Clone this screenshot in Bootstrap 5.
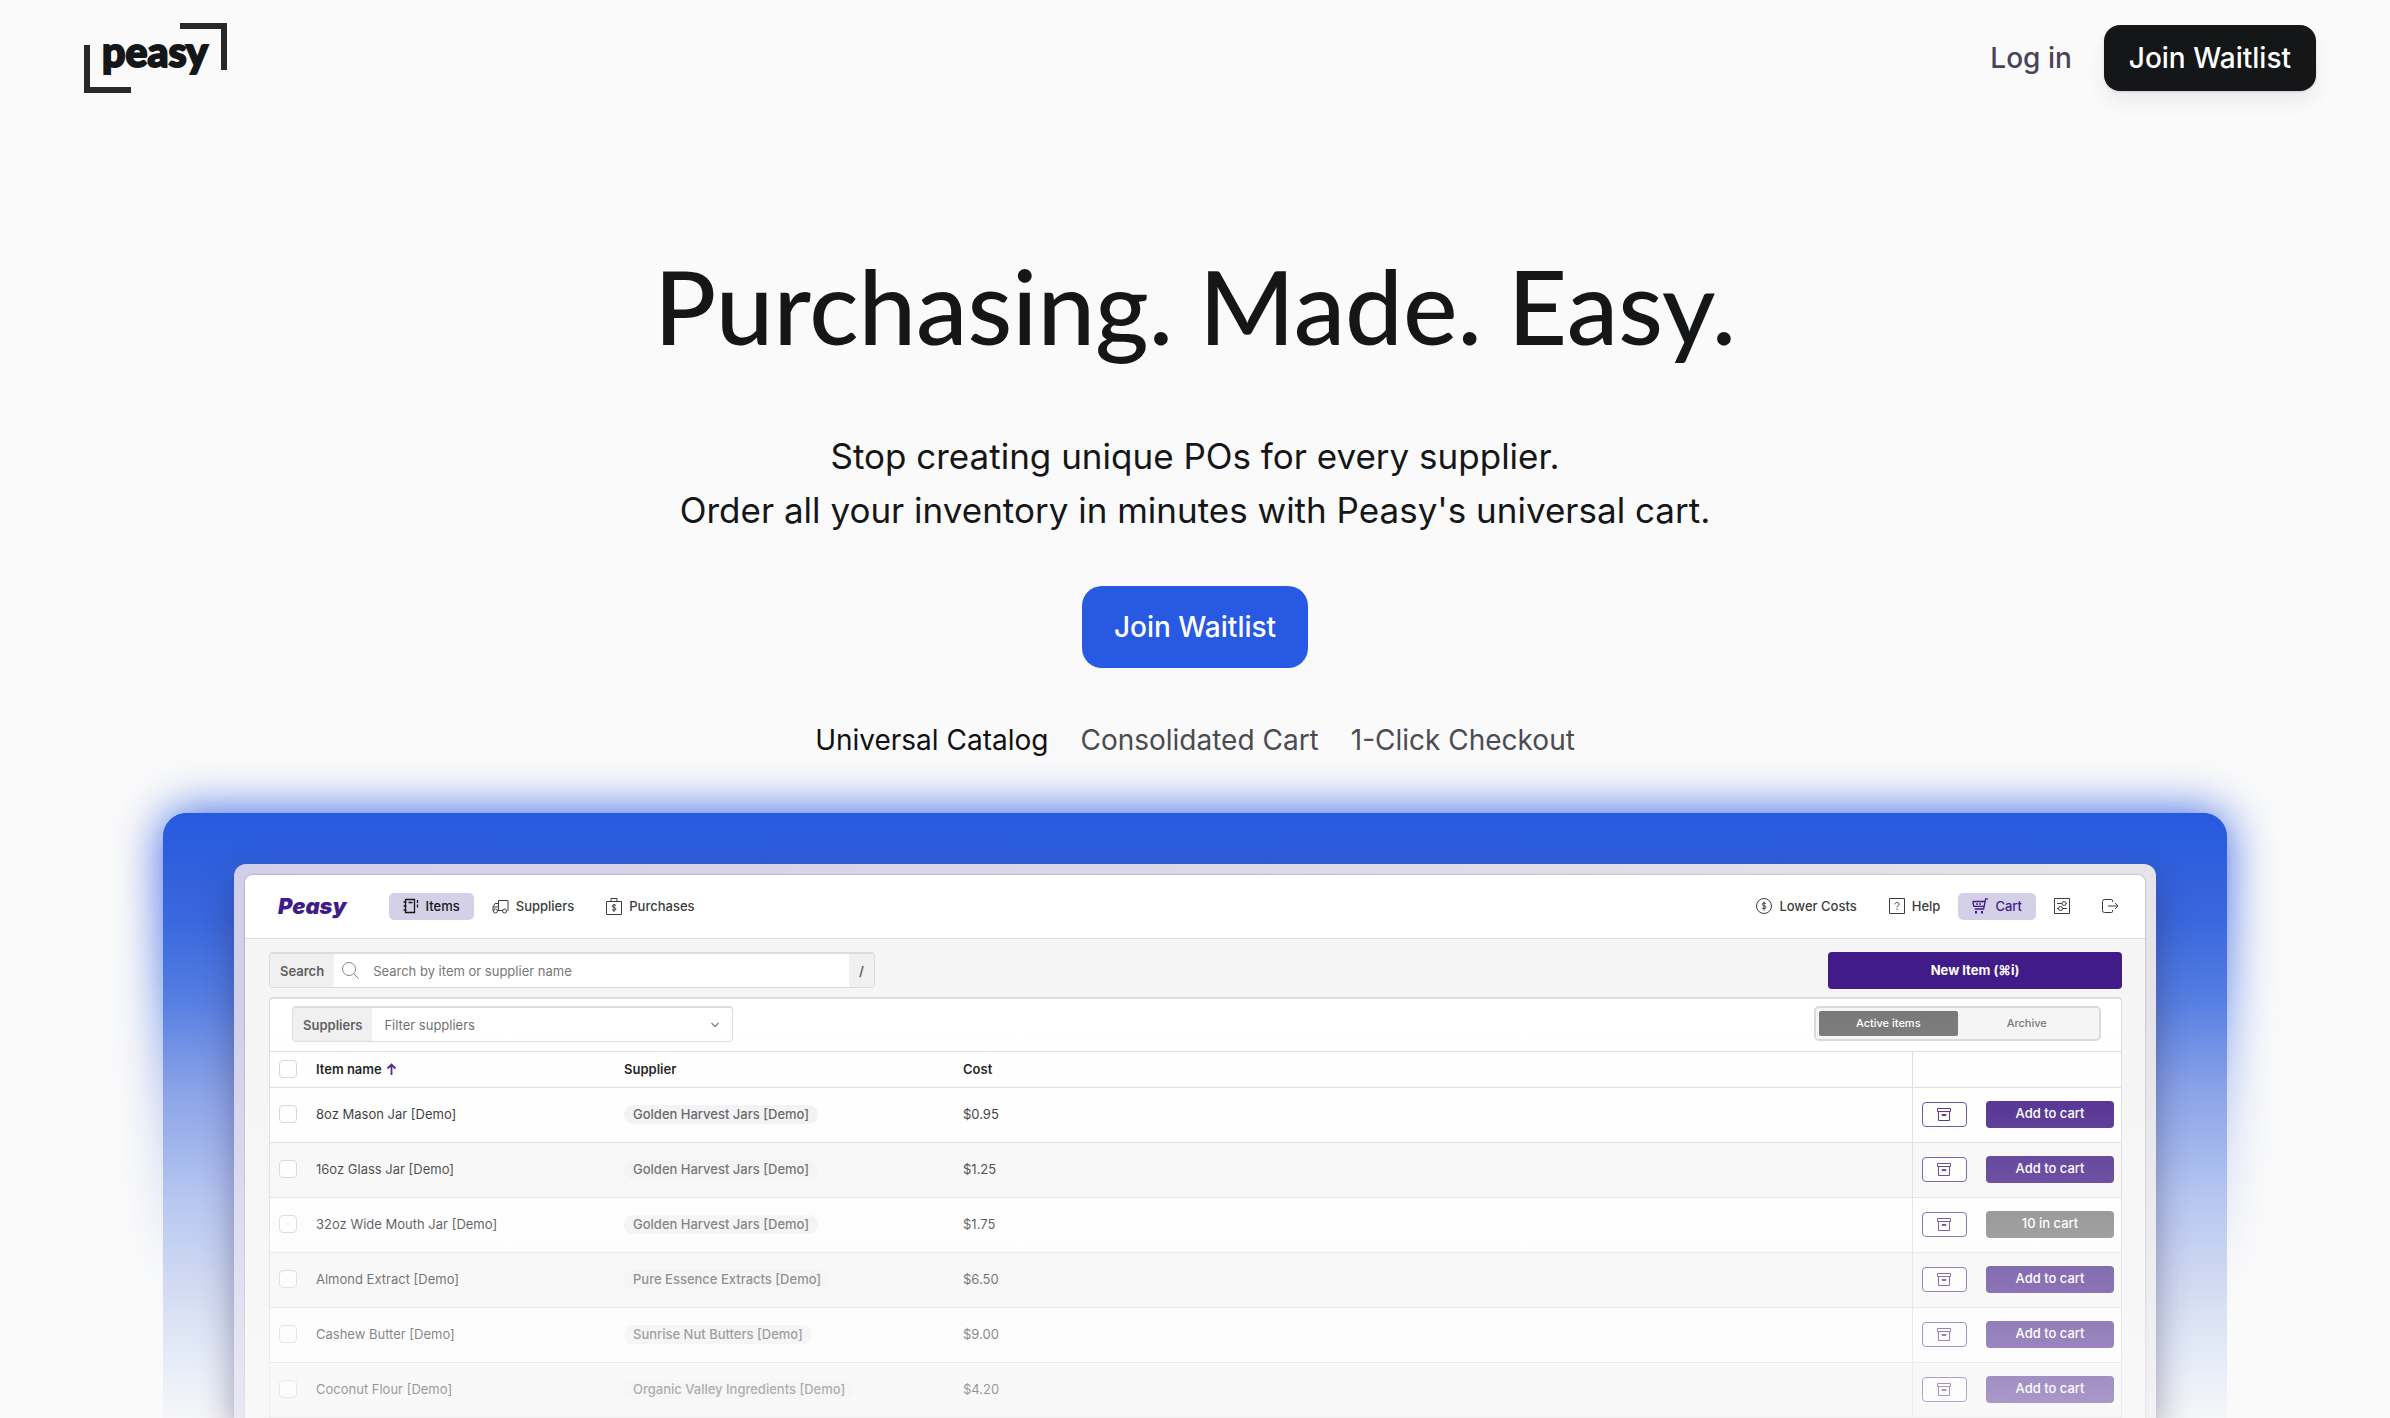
<!DOCTYPE html>
<html lang="en">
<head>
<meta charset="utf-8">
<meta name="viewport" content="width=device-width, initial-scale=1">
<title>Peasy</title>
<link href="https://cdn.jsdelivr.net/npm/bootstrap@5.3.0/dist/css/bootstrap.min.css" rel="stylesheet">
<style>
:root{--ink:#151618;--blue:#2759e2;--plum:#411b87;--line:#dcdcdc}
body{background:#fafafa;color:var(--ink);font-family:Inter,"Liberation Sans",sans-serif;overflow-x:hidden}
.site-header{padding:25px 74px 25px 84px}
.site-logo{display:block;margin:-8px 0}
.site-logo text{font-family:Lato,sans-serif;font-weight:900;font-size:41px;fill:var(--ink);stroke:var(--ink);stroke-width:2}
.site-link{font-size:28px;font-weight:500;line-height:42px;text-decoration:none;color:#4a4458}
.site-btn{font-size:28px;font-weight:500;line-height:42px;border:0;color:#fff}
.site-btn:hover{color:#fff;background:#333}
.btn-ink{background:var(--ink);padding:12px 25px;border-radius:16px;box-shadow:0 12px 20px rgba(0,0,0,.06),0 1px 2px rgba(40,20,60,.15)}
.btn-hero{background:var(--blue);padding:20px 32px;border-radius:20px}
.hero-title{font-family:Lato,"Open Sans",sans-serif;font-weight:500;font-size:103px;line-height:122px;margin:0 0 63px}
.hero-copy{font-size:35px;line-height:54px;margin:0 0 49px}
.hero{padding-top:128px}
.feature-tabs{gap:32px;margin:51px 0 52px}
.feature-tabs .nav-link{font-size:28px;line-height:42px;font-weight:400;color:#4b4b50;padding:0}
.feature-tabs .nav-link.active{color:#101012}

.stage{position:relative;isolation:isolate;max-width:2064px;padding:51px 71px 0;border-radius:24px 24px 0 0;
  background:linear-gradient(#2759e2 0%,#2f5fdc 8%,#3a68de 18%,#567fe2 31%,#8ba3e8 46%,#b7c7f1 64%,#d5ddf2 80%,#e8eef8 92%,#f5f6f9 100%)}
.stage::before{content:"";position:absolute;inset:0;z-index:-2;border-radius:24px;filter:blur(24px);
  background:linear-gradient(#2759e2,rgba(39,89,226,.8) 25%,rgba(39,89,226,.3) 50%,rgba(39,89,226,0) 78%)}
.stage::after{content:"";position:absolute;inset:0;z-index:-1;border-radius:24px 24px 0 0;background:inherit}
.frame{position:relative;padding:11px 11px 0;border-radius:12px 12px 0 0;background:linear-gradient(90deg,#d2cfea,#dcd8e8 50%,#e6e4e8);box-shadow:0 16px 34px rgba(40,30,80,.42)}
.fade-out{position:absolute;inset:0;pointer-events:none;background:linear-gradient(rgba(250,250,250,0) 27%,rgba(250,250,250,.58) 100%)}
.app{background:#f5f5f5;border-radius:8px 8px 0 0;box-shadow:0 0 2px rgba(60,50,90,.5);font-size:13px;line-height:20px}
.app svg{fill:none;stroke:currentColor;stroke-width:1;flex:none;display:block}
.app-nav{background:#fff;border-bottom:1px solid var(--line);border-radius:8px 8px 0 0;padding:17px 12px 18px 33px;height:64px}
.app-brand{font-size:22px;font-weight:900;font-style:italic;line-height:27px;color:var(--plum);text-decoration:none;margin-right:42px}
.app-link{display:flex;align-items:center;gap:7px;height:27px;padding:0 14px;border-radius:5px;font-weight:500;color:#3d3d40;text-decoration:none}
.app-link.on{background:#d4d0e8;color:#151618}
.app-link.cart{background:#d4d0e8;color:var(--plum)}
.app-menu,.app-tools{gap:4px}
.app-body{padding:13px 23px 0 24px}
.field{border:1px solid var(--line);border-radius:4px;background:#fff;overflow:hidden;height:36px;display:flex;align-items:stretch}
.field-tag{background:#f0f0f0;color:#5f5f5f;font-weight:600;display:flex;align-items:center;padding:0 10px}
.field-icon{display:flex;align-items:center;padding:0 12px 0 8px}
.field input,.field select{border:0;outline:0;background:#fff;font-size:13px;color:#6f6f6f;min-width:0;flex:1}
.field select{appearance:none;padding:0 12px}
.field input::placeholder{color:#777;opacity:1}
.search-box{width:606px;border-top-width:2px}
.filter-box{width:441px;border-top-width:2px}
.btn-new{width:294px;height:37px;background:var(--plum);color:#fff;border:0;border-radius:4px;font-size:13px;font-weight:700;padding:0}
.panel-box{margin-top:8px;background:#fff;border:1px solid var(--line);border-top-width:2px;border-bottom:0;border-radius:4px 4px 0 0}
.filter-row{padding:7px 20px 9px 22px;border-bottom:1px solid var(--line)}
.segment{width:287px;height:35px;border:2px solid #dadada;border-radius:5px;background:#f5f5f5;padding:3px}
.segment .btn{flex:1;padding:0;border:0;border-radius:2px;font-size:11px;line-height:25px;font-weight:500;color:#777}
.segment .btn-check:checked+.btn{background:#797979;color:#fff}
.items{--bs-table-bg:transparent;table-layout:fixed;margin:0;font-size:13px;color:#1c1c1f}
.items th,.items td{height:55px;padding:0 0 1px;vertical-align:middle;border-bottom:1px solid var(--line);background:none;box-shadow:none;color:inherit}
.items thead th{height:35px;font-weight:600;color:#111}
.items tbody tr:nth-child(even){background:#f7f7f7}
.items .c-tick{width:46px;padding-left:9px}
.items .c-name{width:308px}
.items .c-supp{width:339px}
.items .c-act{width:209px;border-left:1px solid var(--line);padding:0 7px 1px 9px}
.items .form-check-input{display:block;width:18px;height:18px;margin:0;border:1px solid #d2d2d2;border-radius:4px;background-color:#fff}
.supplier{display:inline-block;padding:0 9px;border-radius:9px;line-height:19px;background:#f2f2f2;color:#505054;font-weight:500}
.btn-arch{width:45px;height:25px;padding:0;border:1px solid #5a3a9c;border-radius:4px;color:var(--plum);display:grid;place-items:center;background:#fff}
.btn-add{width:128px;height:27px;padding:0;border:0;border-radius:4px;background:var(--plum);color:#fff;font-size:13px;font-weight:500}
.btn-add.in{background:#757575}
</style>
</head>
<body>
<svg width="0" height="0" class="position-absolute" aria-hidden="true">
  <symbol id="i-archive" viewBox="0 0 14 14"><path d="M.5 1.5h13v3H.5zM1.5 4.5v9h11v-9M5 7.5h4v1H5z"/></symbol>
</svg>

<header class="site-header d-flex justify-content-between align-items-center">
  <a href="#" aria-label="peasy">
    <svg class="site-logo" width="144" height="74" viewBox="0 0 144 74">
      <path d="M3 24v45h44M96 5h44v44" fill="none" stroke="#28282a" stroke-width="6"/>
      <text x="18" y="46">peasy</text>
    </svg>
  </a>
  <nav class="d-flex align-items-center gap-4">
    <a class="site-link me-2" href="#">Log in</a>
    <button type="button" class="btn site-btn btn-ink">Join Waitlist</button>
  </nav>
</header>

<main class="hero text-center">
  <h1 class="hero-title">Purchasing. Made. Easy.</h1>
  <p class="hero-copy">Stop creating unique POs for every supplier.<br>Order all your inventory in minutes with Peasy's universal cart.</p>
  <button type="button" class="btn site-btn btn-hero">Join Waitlist</button>
  <nav class="nav feature-tabs justify-content-center">
    <a class="nav-link active" href="#">Universal Catalog</a>
    <a class="nav-link" href="#">Consolidated Cart</a>
    <a class="nav-link" href="#">1-Click Checkout</a>
  </nav>

  <section class="stage mx-auto text-start">
    <div class="frame">
      <div class="app">
        <nav class="app-nav d-flex align-items-center">
          <a class="app-brand" href="#">Peasy</a>
          <div class="app-menu d-flex align-items-center">
            <a class="app-link on" href="#"><svg width="16" height="16" viewBox="0 0 16 16"><path d="M2.500 1.500h9v13h-9zM.5 4h3M.5 8h3M.5 12h3M5.500 4.500h4" stroke-width="1.300"/><path d="M14.500 2v3M14.500 6.500v3" stroke-width="1.300"/></svg>Items</a>
            <a class="app-link" href="#"><svg width="17" height="16" viewBox="0 0 17 16"><path d="M6.500 13V2.500h9.500V13M6.500 5.500H3L1 9v4M6.500 9H1M5.500 12.500h5"/><circle cx="3.500" cy="13" r="2"/><circle cx="12.500" cy="13" r="2"/></svg>Suppliers</a>
            <a class="app-link" href="#"><svg width="16" height="17" viewBox="0 0 16 17"><path d="M.5 3.500h15v13H.5zM5 3.500v-3h6v3M10 7.500c-.6-1-3.800-1-3.800.6 0 1.900 3.800.9 3.800 2.900 0 1.700-3.400 1.700-4 .3M8 6v8"/></svg>Purchases</a>
          </div>
          <div class="app-tools d-flex align-items-center ms-auto">
            <a class="app-link" href="#"><svg width="16" height="16" viewBox="0 0 16 16"><circle cx="8" cy="8" r="7.500"/><path d="M10 5.800c-.6-1.100-3.800-1-3.800.6 0 1.900 3.800.9 3.800 2.900 0 1.700-3.400 1.700-4 .3M8 3.500v9"/></svg>Lower Costs</a>
            <a class="app-link" href="#"><svg width="16" height="16" viewBox="0 0 16 16"><path d="M.5.5h15v15H.5zM6 6.300c0-2.600 4-2.400 4-.1 0 1.400-2 1.500-2 3.100M8 10.700v1.300" /></svg>Help</a>
            <a class="app-link cart" href="#"><svg width="16" height="16" viewBox="0 0 16 16"><path d="M16 .8h-2.300L11.600 11H2.800M.6 3.500h12.200M.8 3.500l1 4.800h10.300M5 5v2M8 5v2" stroke-width="1.300"/><path d="M3 13h2v2.500H3zM9 13h2v2.500H9z" fill="currentColor" stroke="none"/></svg>Cart</a>
            <a class="app-link" href="#" aria-label="Settings"><svg width="16" height="16" viewBox="0 0 16 16"><path d="M.5.5h15v15H.5zM3 5.500h5M12 5.500h1M3 10.500h1.500M8.500 10.500H13"/><circle cx="10" cy="5.500" r="2"/><circle cx="6.500" cy="10.500" r="2"/></svg></a>
            <a class="app-link" href="#" aria-label="Log out"><svg width="17" height="16" viewBox="0 0 17 16"><path d="M10.500 4V2.500a1 1 0 0 0-1-1h-7a2 2 0 0 0-2 2v9a2 2 0 0 0 2 2h7a1 1 0 0 0 1-1V12M6 8h10M13 5l3 3-3 3"/></svg></a>
          </div>
        </nav>

        <div class="app-body">
          <div class="d-flex justify-content-between">
            <div class="field search-box">
              <label class="field-tag" for="q">Search</label>
              <span class="field-icon"><svg width="17" height="17" viewBox="0 0 17 17" style="color:#858585"><circle cx="7" cy="7" r="6.500"/><path d="M11.700 11.700l4.800 4.800"/></svg></span>
              <input id="q" type="text" placeholder="Search by item or supplier name">
              <span class="field-tag">/</span>
            </div>
            <button type="button" class="btn btn-new">New Item (⌘i)</button>
          </div>

          <div class="panel-box">
            <div class="filter-row d-flex justify-content-between">
              <div class="field filter-box">
                <label class="field-tag" for="supplier">Suppliers</label>
                <select id="supplier"><option>Filter suppliers</option></select>
                <span class="field-icon"><svg width="10" height="6" viewBox="0 0 10 6" style="color:#8a8a8a"><path d="M1.500 1L5 4.500 8.500 1" stroke-width="1.500"/></svg></span>
              </div>
              <div class="segment d-flex" role="group" aria-label="Item status">
                <input type="radio" class="btn-check" name="status" id="s-active" checked><label class="btn" for="s-active">Active items</label>
                <input type="radio" class="btn-check" name="status" id="s-archive"><label class="btn" for="s-archive">Archive</label>
              </div>
            </div>
            <table class="table items">
              <thead>
                <tr>
                  <th class="c-tick"><input class="form-check-input" type="checkbox" aria-label="Select all"></th>
                  <th class="c-name"><span class="d-flex align-items-center gap-1">Item name <svg width="11" height="12" viewBox="0 0 11 12" style="color:#411b87"><path d="M5.500 12V1.500M1.500 5.500l4-4 4 4" stroke-width="1.800"/></svg></span></th>
                  <th class="c-supp">Supplier</th>
                  <th>Cost</th>
                  <th class="c-act" aria-label="Actions"></th>
                </tr>
              </thead>
              <tbody>
                <tr><td class="c-tick"><input class="form-check-input" type="checkbox" aria-label="Select 8oz Mason Jar"></td><td>8oz Mason Jar [Demo]</td><td><span class="supplier">Golden Harvest Jars [Demo]</span></td><td>$0.95</td><td class="c-act"><div class="d-flex justify-content-between align-items-center"><button type="button" class="btn btn-arch" aria-label="Archive"><svg width="14" height="14"><use href="#i-archive"/></svg></button><button type="button" class="btn btn-add">Add to cart</button></div></td></tr>
                <tr><td class="c-tick"><input class="form-check-input" type="checkbox" aria-label="Select 16oz Glass Jar"></td><td>16oz Glass Jar [Demo]</td><td><span class="supplier">Golden Harvest Jars [Demo]</span></td><td>$1.25</td><td class="c-act"><div class="d-flex justify-content-between align-items-center"><button type="button" class="btn btn-arch" aria-label="Archive"><svg width="14" height="14"><use href="#i-archive"/></svg></button><button type="button" class="btn btn-add">Add to cart</button></div></td></tr>
                <tr><td class="c-tick"><input class="form-check-input" type="checkbox" aria-label="Select 32oz Wide Mouth Jar"></td><td>32oz Wide Mouth Jar [Demo]</td><td><span class="supplier">Golden Harvest Jars [Demo]</span></td><td>$1.75</td><td class="c-act"><div class="d-flex justify-content-between align-items-center"><button type="button" class="btn btn-arch" aria-label="Archive"><svg width="14" height="14"><use href="#i-archive"/></svg></button><button type="button" class="btn btn-add in">10 in cart</button></div></td></tr>
                <tr><td class="c-tick"><input class="form-check-input" type="checkbox" aria-label="Select Almond Extract"></td><td>Almond Extract [Demo]</td><td><span class="supplier">Pure Essence Extracts [Demo]</span></td><td>$6.50</td><td class="c-act"><div class="d-flex justify-content-between align-items-center"><button type="button" class="btn btn-arch" aria-label="Archive"><svg width="14" height="14"><use href="#i-archive"/></svg></button><button type="button" class="btn btn-add">Add to cart</button></div></td></tr>
                <tr><td class="c-tick"><input class="form-check-input" type="checkbox" aria-label="Select Cashew Butter"></td><td>Cashew Butter [Demo]</td><td><span class="supplier">Sunrise Nut Butters [Demo]</span></td><td>$9.00</td><td class="c-act"><div class="d-flex justify-content-between align-items-center"><button type="button" class="btn btn-arch" aria-label="Archive"><svg width="14" height="14"><use href="#i-archive"/></svg></button><button type="button" class="btn btn-add">Add to cart</button></div></td></tr>
                <tr><td class="c-tick"><input class="form-check-input" type="checkbox" aria-label="Select Coconut Flour"></td><td>Coconut Flour [Demo]</td><td><span class="supplier">Organic Valley Ingredients [Demo]</span></td><td>$4.20</td><td class="c-act"><div class="d-flex justify-content-between align-items-center"><button type="button" class="btn btn-arch" aria-label="Archive"><svg width="14" height="14"><use href="#i-archive"/></svg></button><button type="button" class="btn btn-add">Add to cart</button></div></td></tr>
              </tbody>
            </table>
          </div>
        </div>
      </div>
      <div class="fade-out"></div>
    </div>
  </section>
</main>
<script src="https://cdn.jsdelivr.net/npm/bootstrap@5.3.0/dist/js/bootstrap.bundle.min.js"></script>
</body>
</html>
